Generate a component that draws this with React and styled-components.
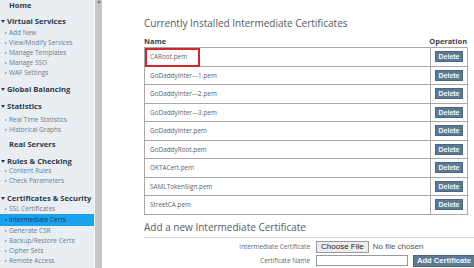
import React from "react";
import styled, { createGlobalStyle } from "styled-components";

const GlobalStyle = createGlobalStyle`
  html, body {
    margin: 0;
    padding: 0;
    background: #ffffff;
    overflow: hidden;
  }
  body {
    font-family: "Open Sans", "Noto Sans", sans-serif;
  }
`;

const Page = styled.div`
  display: flex;
  width: 474px;
  height: 268px;
  overflow: hidden;
`;

const Sidebar = styled.nav`
  width: 94px;
  flex: none;
  background: #e9eef2;
  border-right: 1px solid #f6f8fa;
  overflow: hidden;
`;

const Scrollbar = styled.div`
  width: 7px;
  flex: none;
  background: #c6c6c6;
  position: relative;
  &::before {
    content: "";
    position: absolute;
    top: 0;
    left: 2px;
    border-left: 2px solid transparent;
    border-right: 2px solid transparent;
    border-bottom: 3px solid #7a7a7a;
  }
`;

const Header = styled.div`
  position: relative;
  height: ${(p) => p.$h || 14}px;
  line-height: ${(p) => p.$h || 14}px;
  margin-top: ${(p) => p.$mt || 0}px;
  padding-left: ${(p) => (p.$arrow ? 7 : 9)}px;
  font-size: 7.6px;
  font-weight: 700;
  color: #2b3b4b;
  white-space: nowrap;
  &::before {
    content: ${(p) => (p.$arrow ? '""' : "none")};
    position: absolute;
    left: 1px;
    top: 50%;
    margin-top: -1px;
    border-left: 2.5px solid transparent;
    border-right: 2.5px solid transparent;
    border-top: 3px solid #2b3b4b;
  }
`;

const SubGroup = styled.div`
  margin-top: ${(p) => p.$mt || 0}px;
`;

const SubItem = styled.div`
  position: relative;
  height: ${(p) => (p.$active ? 12 : 10)}px;
  line-height: ${(p) => (p.$active ? 12 : 10)}px;
  padding-left: 9px;
  font-size: 6.5px;
  color: ${(p) => (p.$active ? "#1d3b57" : "#6d7d8c")};
  background: ${(p) => (p.$active ? "#1aa3ea" : "transparent")};
  white-space: nowrap;
  &::before {
    content: "";
    position: absolute;
    left: 5px;
    top: 50%;
    margin-top: -1.5px;
    border-top: 1.5px solid transparent;
    border-bottom: 1.5px solid transparent;
    border-left: 2px solid ${(p) => (p.$active ? "#1d3b57" : "#7f8d99")};
  }
`;

const Main = styled.main`
  flex: 1;
  padding: 16px 6px 0 42px;
  min-width: 0;
`;

const Title = styled.h2`
  margin: 0;
  font-size: 10px;
  line-height: 14px;
  font-weight: 400;
  color: #555b61;
  white-space: nowrap;
`;

const TableHead = styled.div`
  display: flex;
  justify-content: space-between;
  margin-top: 5px;
  padding-right: 1px;
  height: 12px;
  line-height: 12px;
  font-size: 7.4px;
  font-weight: 700;
  color: #38434d;
`;

const Table = styled.div`
  border: 1px solid #a9a9a9;
  border-bottom: none;
`;

const Row = styled.div`
  display: flex;
  height: 18.5px;
  box-sizing: border-box;
  border-bottom: 1px solid #a9a9a9;
  position: relative;
`;

const NameCell = styled.div`
  flex: 1;
  display: flex;
  align-items: center;
  padding-left: 5px;
  font-size: 6.4px;
  color: #58626b;
`;

const OpCell = styled.div`
  width: 36px;
  border-left: 1px solid #a9a9a9;
  display: flex;
  align-items: center;
  justify-content: center;
`;

const BlueButton = styled.button`
  font-family: "Liberation Sans", Arial, sans-serif;
  font-weight: 700;
  font-size: ${(p) => p.$fs || 7}px;
  color: #f4f7fa;
  background: #5c7a95;
  border: 1px solid #4a6680;
  padding: 0 ${(p) => p.$px || 2}px;
  height: ${(p) => p.$h || 11}px;
  line-height: 1;
  border-radius: 0;
  white-space: nowrap;
  flex: none;
  cursor: pointer;
`;

const Highlight = styled.div`
  position: absolute;
  left: 0;
  top: 0;
  width: 55px;
  height: 19px;
  box-sizing: border-box;
  border: 2px solid #d7262b;
`;

const SectionTitle = styled.h2`
  margin: 5px -6px 0 0;
  padding-bottom: 3px;
  font-size: 10px;
  line-height: 14px;
  font-weight: 400;
  color: #555b61;
  border-bottom: 1px solid #cfd4d8;
  white-space: nowrap;
`;

const Form = styled.div`
  display: grid;
  grid-template-columns: 166px auto;
  column-gap: 6px;
  row-gap: 2px;
  margin-top: 3px;
  align-items: center;
`;

const Label = styled.div`
  text-align: right;
  font-size: 6.4px;
  color: #5e666e;
  white-space: nowrap;
`;

const Controls = styled.div`
  display: flex;
  align-items: center;
  gap: ${(p) => p.$gap || 4}px;
`;

const FileButton = styled.button`
  font-family: "Liberation Sans", Arial, sans-serif;
  font-size: 8px;
  color: #222;
  background: #ececec;
  border: 1px solid #9a9a9a;
  height: 12px;
  padding: 0 4px;
  line-height: 1;
  white-space: nowrap;
`;

const FileNote = styled.span`
  font-family: "Liberation Sans", Arial, sans-serif;
  font-size: 8px;
  color: #555;
  white-space: nowrap;
`;

const TextInput = styled.input`
  width: 92px;
  height: 11px;
  box-sizing: border-box;
  border: 1px solid #999;
  padding: 0;
  flex: none;
`;

const sections = [
  { title: "Virtual Services", mt: 4, arrow: true, subMt: 0,
    items: ["Add New", "View/Modify Services", "Manage Templates", "Manage SSO", "WAF Settings"] },
  { title: "Global Balancing", mt: 4, arrow: true, items: [] },
  { title: "Statistics", mt: 3, arrow: true, subMt: 2,
    items: ["Real Time Statistics", "Historical Graphs"] },
  { title: "Real Servers", mt: 2, arrow: false, items: [] },
  { title: "Rules & Checking", mt: 3, arrow: true, subMt: -2,
    items: ["Content Rules", "Check Parameters"] },
  { title: "Certificates & Security", mt: 5, arrow: true, subMt: -1,
    items: ["SSL Certificates", "Intermediate Certs", "Generate CSR", "Backup/Restore Certs", "Cipher Sets", "Remote Access"] },
];

const certs = [
  "CARoot.pem",
  "GoDaddyInter---1.pem",
  "GoDaddyInter---2.pem",
  "GoDaddyInter---3.pem",
  "GoDaddyInter.pem",
  "GoDaddyRoot.pem",
  "OKTACert.pem",
  "SAMLTokenSign.pem",
  "StreetCA.pem",
];

export default function App() {
  return (
    <>
      <GlobalStyle />
      <Page>
        <Sidebar>
          <Header $h={10}>Home</Header>
          {sections.map((s) => (
            <React.Fragment key={s.title}>
              <Header $mt={s.mt} $arrow={s.arrow}>{s.title}</Header>
              {s.items.length > 0 && (
                <SubGroup $mt={s.subMt}>
                  {s.items.map((it) => (
                    <SubItem key={it} $active={it === "Intermediate Certs"}>{it}</SubItem>
                  ))}
                </SubGroup>
              )}
            </React.Fragment>
          ))}
        </Sidebar>
        <Scrollbar />
        <Main>
          <Title>Currently Installed Intermediate Certificates</Title>
          <TableHead>
            <span>Name</span>
            <span>Operation</span>
          </TableHead>
          <Table>
            {certs.map((c, i) => (
              <Row key={c}>
                <NameCell>{c}</NameCell>
                <OpCell>
                  <BlueButton>Delete</BlueButton>
                </OpCell>
                {i === 0 && <Highlight />}
              </Row>
            ))}
          </Table>
          <SectionTitle>Add a new Intermediate Certificate</SectionTitle>
          <Form>
            <Label>Intermediate Certificate</Label>
            <Controls>
              <FileButton>Choose File</FileButton>
              <FileNote>No file chosen</FileNote>
            </Controls>
            <Label>Certificate Name</Label>
            <Controls $gap={5}>
              <TextInput />
              <BlueButton $fs={7.6} $h={12} $px={3}>Add Certificate</BlueButton>
            </Controls>
          </Form>
        </Main>
      </Page>
    </>
  );
}
